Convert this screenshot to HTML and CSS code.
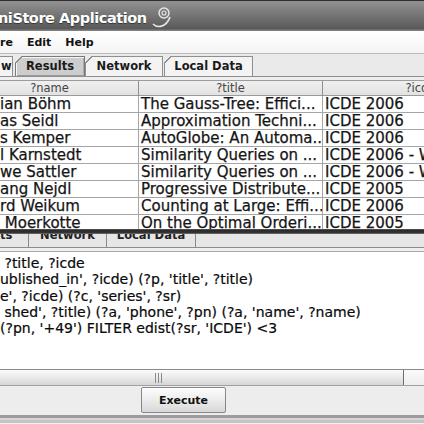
FILE: index.html
```html
<!DOCTYPE html>
<html>
<head>
<meta charset="utf-8">
<title>UniStore Application</title>
<link rel="stylesheet" href="styles.css">
</head>
<body>
<div class="screen">
  <div class="win1">
    <div class="titlebar">
      <span class="title">niStore Application</span>
      <svg class="swirl" viewBox="0 0 20 22" width="20" height="22">
        <circle cx="12" cy="7" r="5" fill="none" stroke="#e6e6e6" stroke-width="1.5"/>
        <circle cx="12" cy="7" r="2" fill="none" stroke="#e6e6e6" stroke-width="1.2"/>
        <path d="M1 18 C 5 22, 14 22, 18 11" fill="none" stroke="#e6e6e6" stroke-width="1.7"/>
      </svg>
    </div>
    <div class="menubar">
      <span>re</span><span>Edit</span><span>Help</span>
    </div>
    <div class="tabs">
      <div class="tab tab-partial">w</div>
      <div class="tab tab-selected tab-results">Results</div>
      <div class="tab tab-network">Network</div>
      <div class="tab tab-local">Local Data</div>
    </div>
    <div class="panel">
      <div class="grid">
        <div class="th th-name">?name</div><div class="th">?title</div><div class="th">?icde</div>
        <div class="td c0">ian Böhm</div><div class="td">The Gauss-Tree: Effici...</div><div class="td">ICDE 2006</div>
        <div class="td c0">as Seidl</div><div class="td">Approximation Techni...</div><div class="td">ICDE 2006</div>
        <div class="td c0">s Kemper</div><div class="td">AutoGlobe: An Automa...</div><div class="td">ICDE 2006</div>
        <div class="td c0">l Karnstedt</div><div class="td">Similarity Queries on ...</div><div class="td">ICDE 2006 - Workshops</div>
        <div class="td c0">we Sattler</div><div class="td">Similarity Queries on ...</div><div class="td">ICDE 2006 - Workshops</div>
        <div class="td c0">ang Nejdl</div><div class="td">Progressive Distribute...</div><div class="td">ICDE 2005</div>
        <div class="td c0">rd Weikum</div><div class="td">Counting at Large: Effi...</div><div class="td">ICDE 2006</div>
        <div class="td c0"> Moerkotte</div><div class="td">On the Optimal Orderi...</div><div class="td">ICDE 2005</div>
      </div>
    </div>
  </div>
  <div class="divider"></div>
  <div class="win2">
    <div class="tabs2">
      <div class="t2 t2-first"><span>ts</span></div>
      <div class="t2 t2-network"><span>Network</span></div>
      <div class="t2 t2-local"><span>Local Data</span></div>
    </div>
    <div class="editor">
      <div class="line"> ?title, ?icde</div>
      <div class="line">ublished_in', ?icde) (?p, 'title', ?title)</div>
      <div class="line">e', ?icde) (?c, 'series', ?sr)</div>
      <div class="line"> shed', ?title) (?a, 'phone', ?pn) (?a, 'name', ?name)</div>
      <div class="line">(?pn, '+49') FILTER edist(?sr, 'ICDE') &lt;3</div>
    </div>
    <div class="hscroll">
      <div class="thumb"><span class="grip"></span></div>
      <div class="track"></div>
    </div>
    <div class="buttons">
      <button class="exec">Execute</button>
    </div>
    <div class="bottom"></div>
  </div>
</div>
</body>
</html>
```
FILE: styles.css
```css
html, body {
  margin: 0;
  padding: 0;
}
body {
  width: 424px;
  height: 424px;
  overflow: hidden;
  background: #eeeeee;
  font-family: "DejaVu Sans", sans-serif;
  color: #111;
}
.screen {
  width: 424px;
  height: 424px;
  display: flex;
  flex-direction: column;
  overflow: hidden;
}

/* ---------- upper window ---------- */
.win1 {
  height: 229px;
  flex: none;
  overflow: hidden;
  display: flex;
  flex-direction: column;
}
.titlebar {
  flex: none;
  height: 30px;
  border-top: 1px solid #2e2e2e;
  background: linear-gradient(#929292, #767676 45%, #5a5a5a 92%, #8a8a8a);
  display: flex;
  align-items: center;
}
.title {
  margin-left: -2px;
  margin-top: 4px;
  color: #fff;
  font-weight: bold;
  font-size: 14.5px;
  letter-spacing: -0.45px;
  text-shadow: 0 1px 1px #333;
  white-space: nowrap;
}
.swirl {
  margin-left: 5px;
  margin-top: 1px;
  flex: none;
}
.menubar {
  flex: none;
  height: 22px;
  border-bottom: 1px solid #bcbcbc;
  background: linear-gradient(#ffffff, #f4f4f4);
  display: flex;
  align-items: center;
  gap: 14px;
  font-weight: bold;
  font-size: 11px;
  color: #111;
}
.tabs {
  flex: none;
  height: 22px;
  border-bottom: 1px solid #8e8e8e;
  display: flex;
  align-items: flex-end;
  background: #eaeaea;
}
.tab {
  position: relative;
  box-sizing: border-box;
  height: 20px;
  border: 1px solid #8f8f8f;
  border-bottom: none;
  background: #f3f3f3;
  font-weight: bold;
  font-size: 11.5px;
  line-height: 19px;
  text-align: center;
  color: #1a1a1a;
  white-space: nowrap;
}
.tab::before {
  content: "";
  position: absolute;
  left: -1px;
  top: -1px;
  width: 7px;
  height: 7px;
  background: linear-gradient(135deg, #eaeaea 0 47%, #8f8f8f 47% 60%, transparent 60%);
}
.tab-partial {
  width: 14px;
  margin-left: -1px;
  margin-right: 2px;
  text-align: left;
  padding-left: 1px;
}
.tab-partial::before { display: none; }
.tab-results {
  width: 70px;
}
.tab-selected {
  background: #cdcdcd;
  box-shadow: inset 1px 1px 0 #f6f6f6, inset -1px 0 0 #aaaaaa, inset 0 -1px 0 #9a9a9a;
  border-color: #7a7a7a;
}
.tab-network {
  width: 78px;
}
.tab-local {
  width: 89px;
  margin-left: 1px;
}
.panel {
  flex: 1;
  padding-top: 3px;
  overflow: hidden;
  background: #eeeeee;
}
.grid {
  display: grid;
  grid-template-columns: 139px 184px 196px;
  width: 519px;
  border-top: 1px solid #9c9c9c;
  background: #ffffff;
}
.th {
  height: 14px;
  line-height: 14px;
  font-size: 11.5px;
  color: #444;
  text-align: center;
  background: linear-gradient(#f0f0f0, #e2e2e2);
  border-right: 1px solid #8e8e8e;
  border-bottom: 1px solid #9a9a9a;
  white-space: nowrap;
  overflow: hidden;
}
.th-name {
  padding-right: 39px;
}
.td {
  height: 16px;
  line-height: 16px;
  font-size: 15px;
  padding-left: 2px;
  border-right: 1px solid #a6a6a6;
  border-bottom: 1px solid #a6a6a6;
  white-space: pre;
  overflow: hidden;
  color: #151515;
  -webkit-text-stroke: 0.25px #151515;
}
.td.c0 {
  padding-left: 0;
}

/* ---------- divider between windows ---------- */
.divider {
  flex: none;
  height: 5px;
  background: linear-gradient(#5a5a5a, #2c2c2c 30%, #333 70%, #777);
}

/* ---------- lower window ---------- */
.win2 {
  flex: 1;
  display: flex;
  flex-direction: column;
}
.tabs2 {
  flex: none;
  height: 13px;
  border-bottom: 1px solid #8c8c8c;
  display: flex;
  overflow: hidden;
  background: #e6e6e6;
}
.t2 {
  box-sizing: border-box;
  border-right: 1px solid #8a8a8a;
  text-align: center;
  white-space: nowrap;
  overflow: hidden;
}
.t2 span {
  display: block;
  margin-top: -5px;
  font-weight: bold;
  font-size: 11.5px;
  line-height: 12px;
  color: #222;
}
.t2-first {
  width: 29px;
  text-align: left;
}
.t2-network {
  width: 78px;
}
.t2-local {
  width: 89px;
}
.editor {
  flex: none;
  margin-top: 3px;
  height: 118px;
  box-sizing: border-box;
  border-top: 1px solid #a8a8a8;
  background: #ffffff;
  padding-top: 3px;
  overflow: hidden;
}
.line {
  font-size: 14px;
  line-height: 16.25px;
  white-space: pre;
  color: #0a0a0a;
  -webkit-text-stroke: 0.2px #0a0a0a;
}
.hscroll {
  flex: none;
  height: 15px;
  border-top: 1px solid #8a8a8a;
  border-bottom: 1px solid #a0a0a0;
  display: flex;
  overflow: hidden;
  background: #f4f4f4;
}
.thumb {
  flex: none;
  width: 489px;
  margin-left: -86px;
  border-right: 1px solid #6e6e6e;
  background: linear-gradient(#fbfbfb, #ececec 45%, #d6d6d6);
  display: flex;
  justify-content: center;
  align-items: center;
}
.grip {
  width: 7px;
  height: 10px;
  background: repeating-linear-gradient(90deg, #8a8a8a 0 1px, transparent 1px 3px);
}
.track {
  flex: 1;
  background: linear-gradient(#fafafa, #eeeeee);
}
.buttons {
  flex: none;
  height: 29px;
  box-sizing: border-box;
  padding-top: 1px;
  padding-left: 141px;
  background: #ededed;
  display: flex;
  align-items: flex-start;
}
.exec {
  width: 85px;
  height: 26px;
  margin: 0;
  padding: 0;
  border: 1px solid #878787;
  border-radius: 2px;
  background: linear-gradient(#fdfdfd, #ececec 50%, #d8d8d8);
  font-family: "DejaVu Sans", sans-serif;
  font-weight: bold;
  font-size: 11px;
  color: #111;
}
.bottom {
  flex: none;
  height: 8px;
  background: linear-gradient(#9c9c9c 0 3px, #d6d6d6 3px 5px, #c4c4c4 5px);
}
```
